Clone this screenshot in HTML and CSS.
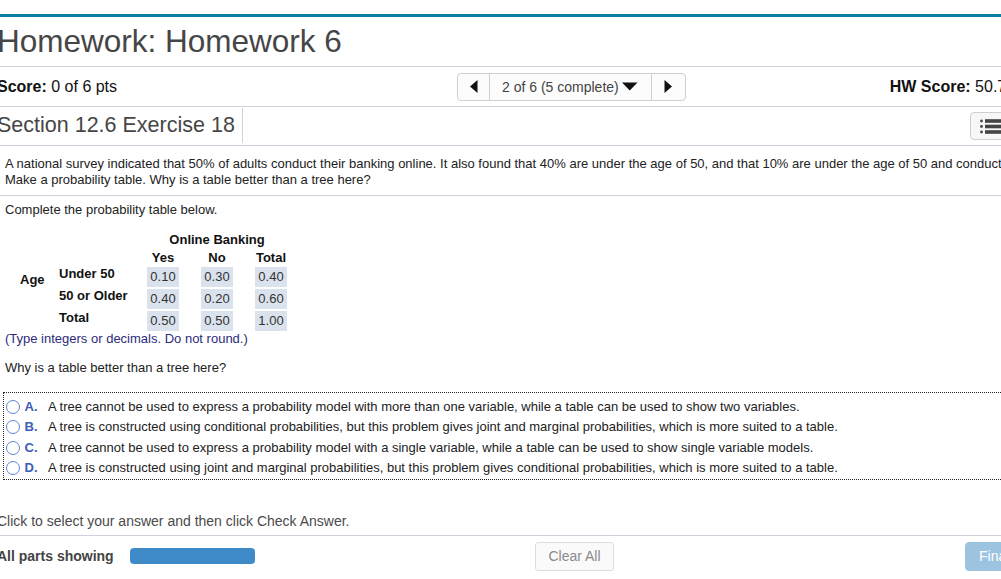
FILE: index.html
```html
<!DOCTYPE html>
<html lang="en">
<head>
    <meta charset="UTF-8">
    <title>Homework: Homework 6</title>
    <link rel="stylesheet" href="styles.css">
</head>
<body>
    <div class="page">
        <div class="top-rule"></div>
        <h1 class="hw-title">Homework: Homework 6</h1>

        <div class="score-row">
            <div class="score"><b>Score:</b> 0 of 6 pts</div>
            <div class="pager">
                <button class="pager-arrow prev" title="Previous question">
                    <svg width="8" height="13" viewBox="0 0 8 13"><path d="M7.5 0V13L0 6.5Z" fill="#111"/></svg>
                </button>
                <button class="pager-mid">
                    2 of 6 (5 complete)
                    <svg width="16" height="9" viewBox="0 0 16 9"><path d="M0 0.5H15.5L7.75 8.5Z" fill="#111"/></svg>
                </button>
                <button class="pager-arrow next" title="Next question">
                    <svg width="8" height="13" viewBox="0 0 8 13"><path d="M0.5 0V13L8 6.5Z" fill="#111"/></svg>
                </button>
            </div>
            <div class="hw-score"><b>HW Score:</b> 50.7%, 3.04 of 6 pts</div>
        </div>

        <div class="section-row">
            <div class="section-title">Section 12.6 Exercise 18</div>
            <button class="list-btn" title="Question list">
                <svg width="24" height="15" viewBox="0 0 24 15">
                    <circle cx="1.5" cy="2" r="1.4" fill="#444"/>
                    <circle cx="1.5" cy="7.5" r="1.4" fill="#444"/>
                    <circle cx="1.5" cy="13" r="1.4" fill="#444"/>
                    <rect x="5" y="0.2" width="19" height="3.6" fill="#444"/>
                    <rect x="5" y="5.7" width="19" height="3.6" fill="#444"/>
                    <rect x="5" y="11.2" width="19" height="3.6" fill="#444"/>
                </svg>
            </button>
        </div>

        <p class="stem">A national survey indicated that 50% of adults conduct their banking online. It also found that 40% are under the age of 50, and that 10% are under the age of 50 and conduct their banking online.<br>Make a probability table. Why is a table better than a tree here?</p>

        <div class="work">
            <p class="prompt">Complete the probability table below.</p>

            <div class="prob-table">
                <div class="tbl-caption">Online Banking</div>
                <div class="col-head c3">Yes</div>
                <div class="col-head c4">No</div>
                <div class="col-head c5">Total</div>

                <div class="age">Age</div>

                <div class="row-label r3">Under 50</div>
                <div class="cell r3 c3">0.10</div>
                <div class="cell r3 c4">0.30</div>
                <div class="cell r3 c5">0.40</div>

                <div class="row-label r4">50 or Older</div>
                <div class="cell r4 c3">0.40</div>
                <div class="cell r4 c4">0.20</div>
                <div class="cell r4 c5">0.60</div>

                <div class="row-label r5">Total</div>
                <div class="cell r5 c3">0.50</div>
                <div class="cell r5 c4">0.50</div>
                <div class="cell r5 c5">1.00</div>
            </div>

            <p class="hint">(Type integers or decimals. Do not round.)</p>

            <p class="why">Why is a table better than a tree here?</p>

            <div class="choices">
                <div class="choice"><span class="radio"></span><span class="letter">A.</span>A tree cannot be used to express a probability model with more than one variable, while a table can be used to show two variables.</div>
                <div class="choice"><span class="radio"></span><span class="letter">B.</span>A tree is constructed using conditional probabilities, but this problem gives joint and marginal probabilities, which is more suited to a table.</div>
                <div class="choice"><span class="radio"></span><span class="letter">C.</span>A tree cannot be used to express a probability model with a single variable, while a table can be used to show single variable models.</div>
                <div class="choice"><span class="radio"></span><span class="letter">D.</span>A tree is constructed using joint and marginal probabilities, but this problem gives conditional probabilities, which is more suited to a table.</div>
            </div>
        </div>

        <div class="instructions">Click to select your answer and then click Check Answer.</div>

        <div class="footer">
            <div class="parts-label">All parts showing</div>
            <div class="progress"></div>
            <button class="btn-clear">Clear All</button>
            <button class="btn-final">Final Check</button>
        </div>
    </div>
</body>
</html>
```

FILE: styles.css
```css
body {
    margin: 0;
    overflow: hidden;
    font-family: "Liberation Sans", Arial, sans-serif;
    color: #222;
    background-color: #fff;
}

button {
    font-family: inherit;
    cursor: pointer;
}

.page {
    width: 1070px;
    margin-left: -3px;
    padding-top: 14px;
}

.top-rule {
    height: 3px;
    background-color: #0b7ea6;
}

.hw-title {
    margin: 0;
    padding: 6px 0 7px;
    font-size: 31.5px;
    font-weight: normal;
    line-height: 36px;
    color: #464646;
    border-bottom: 1px solid #cdd2dd;
}

.score-row {
    display: flex;
    align-items: center;
    height: 39px;
    border-bottom: 1px solid #cdd2dd;
    font-size: 16px;
    color: #111;
}

.score-row > * {
    flex-shrink: 0;
    white-space: nowrap;
}

.score {
    width: 460px;
}

.pager {
    display: flex;
    height: 28px;
    box-sizing: border-box;
    border: 1px solid #cfcfcf;
    border-radius: 4px;
    background-color: #fcfcfc;
}

.pager button {
    border: none;
    background: transparent;
    padding: 0;
    display: flex;
    align-items: center;
    justify-content: center;
    white-space: nowrap;
}

.pager-arrow.prev {
    width: 31px;
}

.pager-arrow.next {
    width: 33px;
}

.pager .pager-mid {
    padding: 0 13px 0 12px;
    gap: 3px;
    border-left: 1px solid #cfcfcf;
    border-right: 1px solid #cfcfcf;
    font-size: 14px;
    color: #444;
}

.hw-score {
    margin-left: 204px;
}

.section-row {
    display: flex;
    align-items: center;
    height: 38px;
    border-bottom: 1px solid #cdd2dd;
}

.section-row > * {
    flex-shrink: 0;
}

.section-title {
    width: 246px;
    box-sizing: border-box;
    align-self: stretch;
    display: flex;
    align-items: center;
    margin: 1px 0 2px;
    border-right: 1px solid #cdd2dd;
    font-size: 21.5px;
    color: #464646;
}

.list-btn {
    margin-left: 727px;
    width: 40px;
    height: 28px;
    box-sizing: border-box;
    padding: 0 0 0 9px;
    display: flex;
    align-items: center;
    border: 1px solid #cfcfcf;
    border-radius: 4px;
    background-color: #f7f7f7;
}

.stem {
    margin: 0;
    padding: 10px 8px 7px;
    font-size: 13px;
    line-height: 16px;
    white-space: nowrap;
    border-bottom: 1px solid #cdd2dd;
}

.work {
    padding: 6px 8px 0;
    font-size: 13px;
    line-height: 16px;
}

.prompt {
    margin: 0;
}

.prob-table {
    display: grid;
    grid-template-columns: 54px 88px 54px 54px 32px;
    grid-template-rows: 17.5px 17.5px 22px 22px 19.5px;
    margin-top: 14px;
    color: #111;
}

.tbl-caption {
    grid-column: 3 / 6;
    grid-row: 1;
    text-align: center;
    font-weight: bold;
}

.col-head {
    grid-row: 2;
    width: 32px;
    text-align: center;
    font-weight: bold;
    white-space: nowrap;
}

.c3 { grid-column: 3; }
.c4 { grid-column: 4; }
.c5 { grid-column: 5; }
.r3 { grid-row: 3; }
.r4 { grid-row: 4; }
.r5 { grid-row: 5; }

.age {
    grid-column: 1;
    grid-row: 3 / 5;
    padding: 5px 0 0 15px;
    font-weight: bold;
}

.row-label {
    grid-column: 2;
    font-weight: bold;
    line-height: 13px;
    white-space: nowrap;
}

.cell {
    width: 32px;
    height: 19.5px;
    line-height: 19.5px;
    text-align: center;
    background-color: #dae2ee;
    color: #333;
}

.hint {
    margin: 0;
    color: #2c2c7a;
}

.why {
    margin: 13px 0 0;
}

.choices {
    margin: 16px 0 0 -2px;
    padding: 4px 0 0;
    border: 1px dotted #222;
}

.choice {
    display: flex;
    align-items: center;
    height: 20.5px;
    white-space: nowrap;
    color: #222;
}

.radio {
    width: 14px;
    height: 14px;
    box-sizing: border-box;
    margin: 0 5px 0 1.5px;
    border: 1.4px solid #6183d6;
    border-radius: 50%;
    background-color: #fff;
}

.letter {
    width: 23.5px;
    font-weight: bold;
    color: #3c5db8;
}

.instructions {
    margin-top: 33px;
    padding-bottom: 5px;
    font-size: 14px;
    line-height: 17px;
    color: #4a4a4a;
    border-bottom: 1px solid #cdd2dd;
}

.footer {
    display: flex;
    align-items: center;
    padding-top: 6px;
}

.footer > * {
    flex-shrink: 0;
}

.parts-label {
    width: 133px;
    font-size: 14px;
    font-weight: bold;
    color: #444;
}

.progress {
    width: 125px;
    height: 16px;
    border-radius: 4px;
    background-color: #3f8bca;
}

.btn-clear {
    margin-left: 280px;
    width: 79px;
    height: 29px;
    border: 1px solid #ddd;
    border-radius: 3px;
    background-color: #fafafa;
    font-size: 14px;
    color: #8a8a8a;
}

.btn-final {
    margin-left: 351px;
    height: 29px;
    padding: 0 14px 0 13px;
    border: 1px solid #9cc3df;
    border-radius: 4px;
    background-color: #9cc3df;
    font-size: 14px;
    color: #fff;
    white-space: nowrap;
}
```
